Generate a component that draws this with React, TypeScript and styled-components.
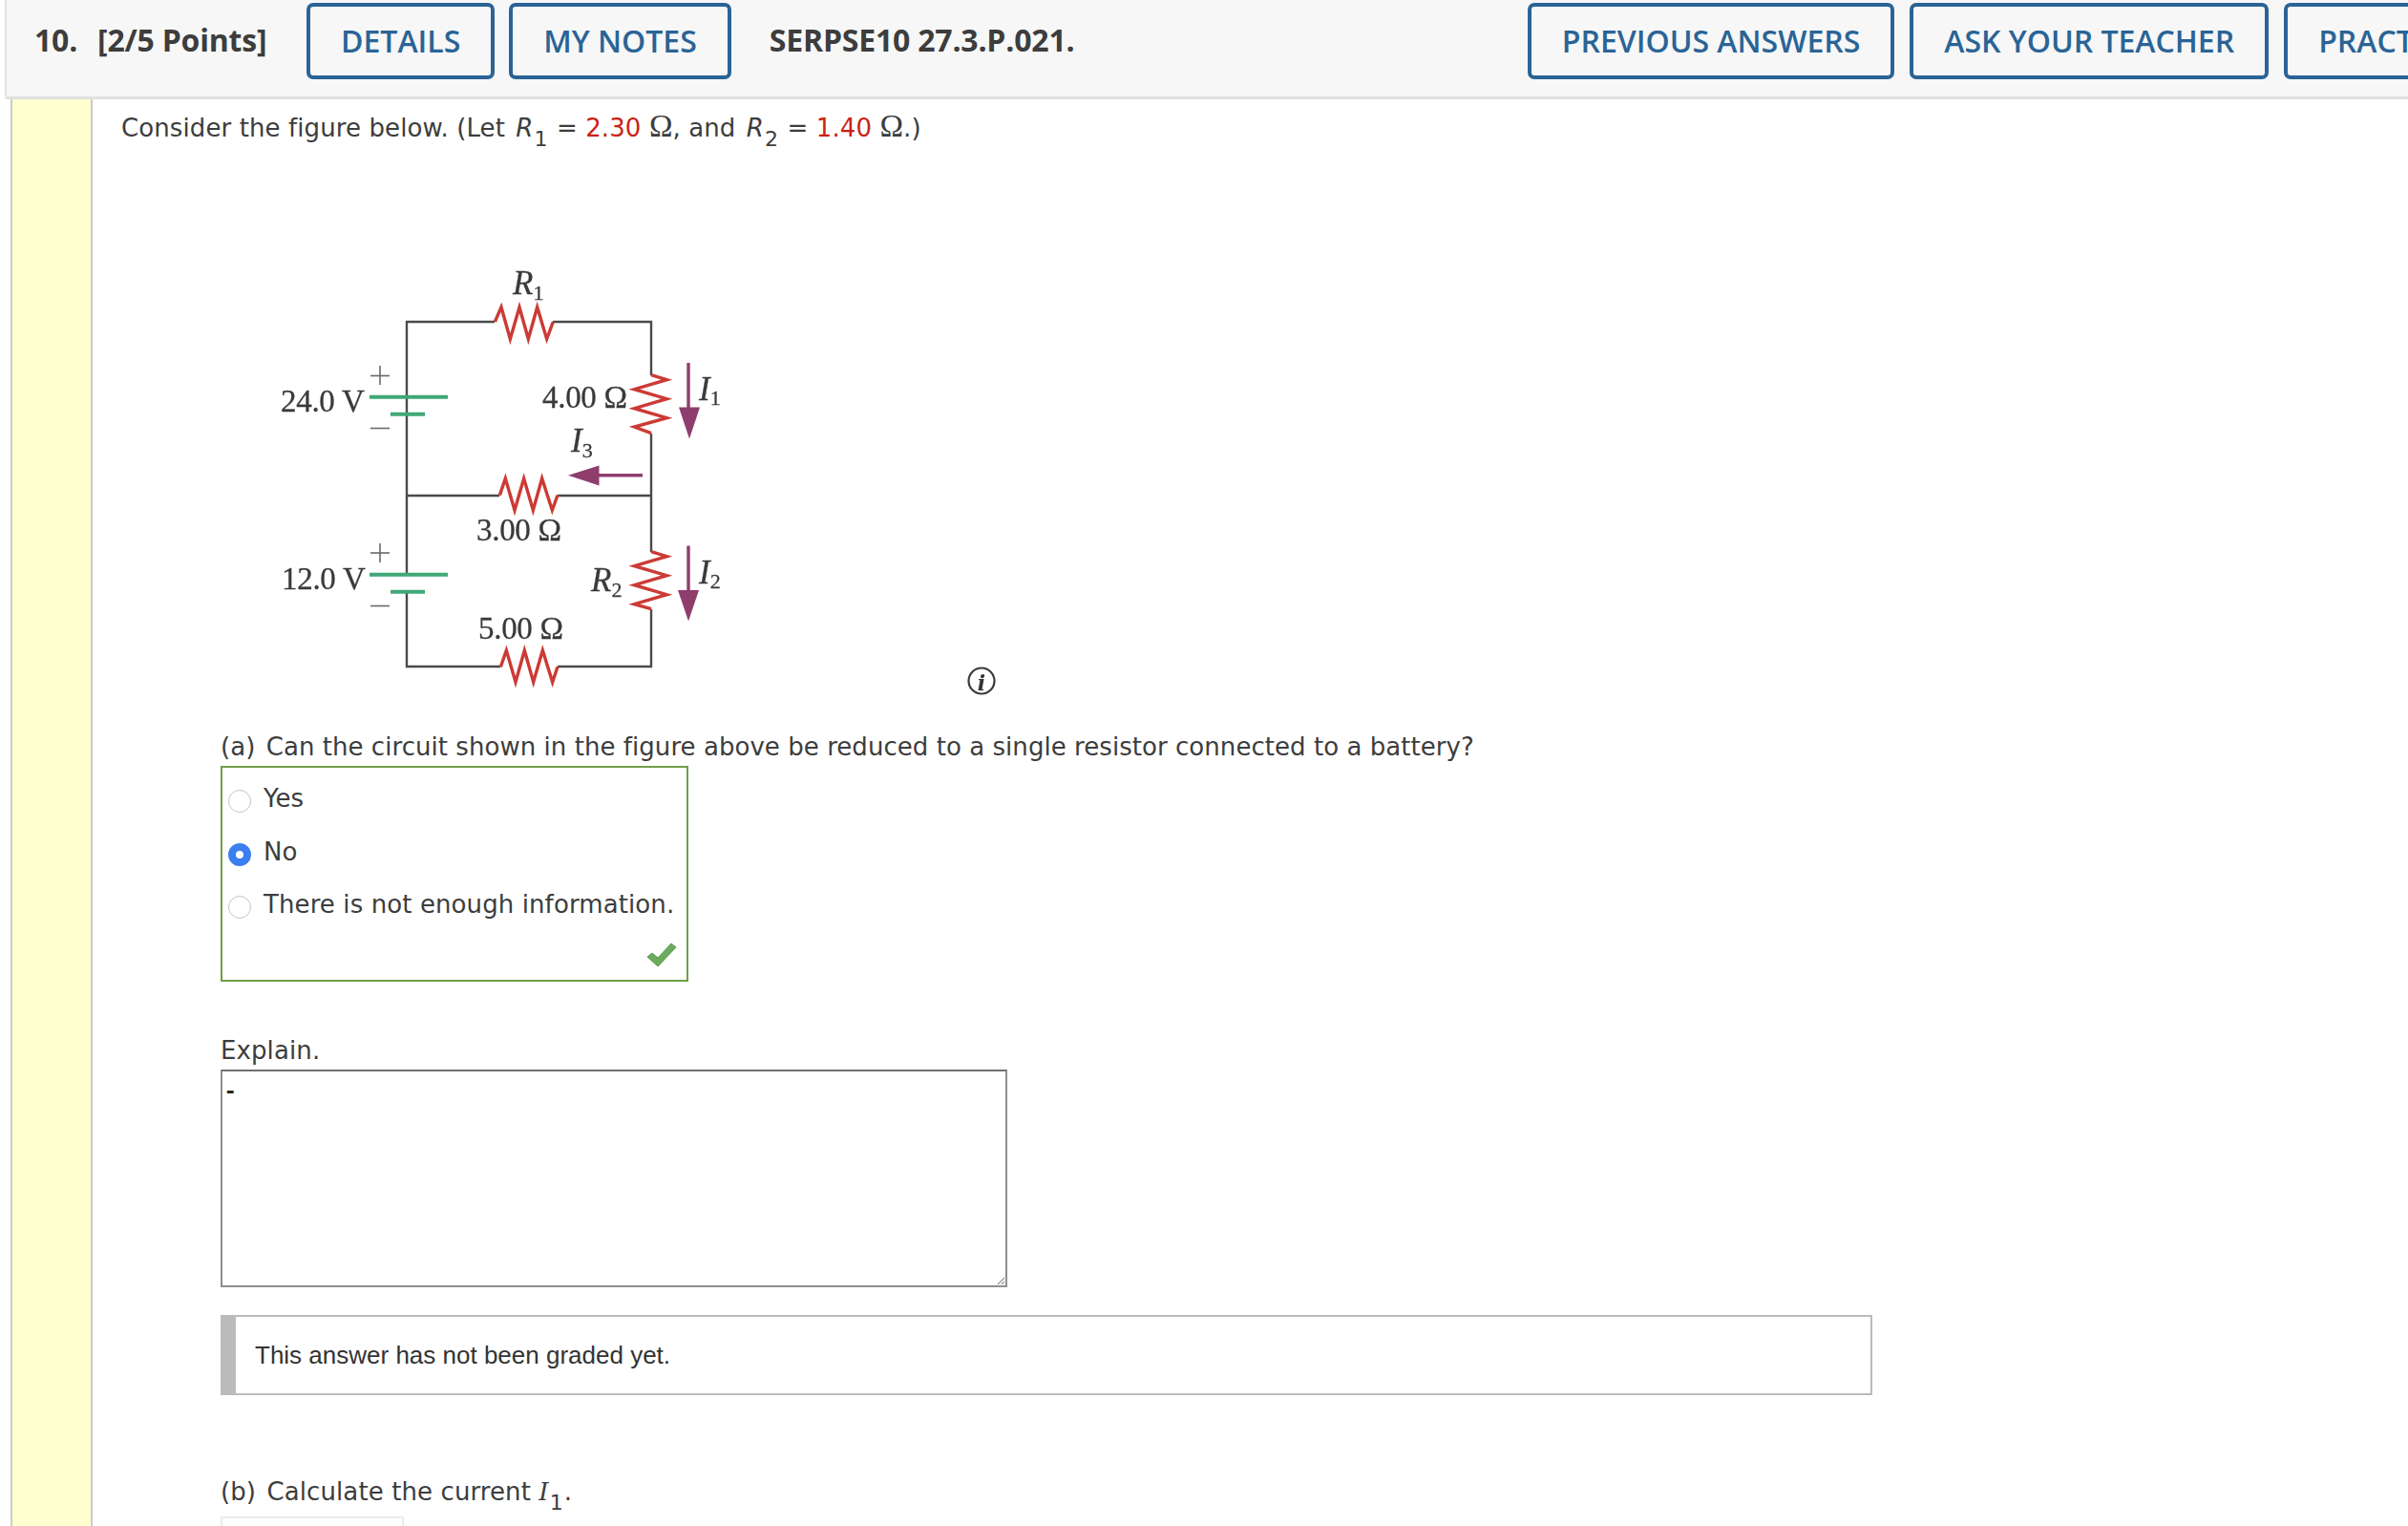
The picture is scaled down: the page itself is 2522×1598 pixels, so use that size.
import React from "react";
import styled, { createGlobalStyle } from "styled-components";

const Global = createGlobalStyle`
  html, body { margin: 0; padding: 0; background: #fff; }
  body { font-family: "DejaVu Sans", Verdana, sans-serif; color: #3d3d3d; }
`;

const Page = styled.div`
  width: 2522px;
  height: 1598px;
  overflow: hidden;
  display: flex;
  flex-direction: column;
`;

const Header = styled.header`
  flex: 0 0 auto;
  height: 104px;
  margin-left: 5px;
  padding-left: 29px;
  padding-top: 3px;
  box-sizing: border-box;
  background: #f7f7f7;
  border-left: 2px solid #e2e2e2;
  border-bottom: 3px solid #e0e0e0;
  border-bottom-left-radius: 3px;
  display: flex;
  align-items: flex-start;
  font-family: "Open Sans", sans-serif;
  font-weight: 600;
  font-size: 32px;
  white-space: nowrap;
`;

const HeadText = styled.span<{ $width: number; $gap?: number }>`
  flex: 0 0 ${(p) => p.$width}px;
  margin-left: ${(p) => p.$gap ?? 0}px;
  height: 80px;
  line-height: 78px;
  color: #3d3d3d;
  font-weight: 700;
  letter-spacing: -0.2px;
`;

const HeadButton = styled.div<{ $gap: number }>`
  flex: 0 0 auto;
  height: 80px;
  line-height: 72px;
  margin-left: ${(p) => p.$gap}px;
  padding: 0 32px;
  box-sizing: border-box;
  border: 4px solid #2a6496;
  border-radius: 7px;
  color: #2a6496;
`;

const Body = styled.div`
  flex: 1 1 auto;
  display: flex;
  min-height: 0;
`;

const Gutter = styled.div`
  flex: 0 0 86px;
  margin-left: 11px;
  box-sizing: border-box;
  background: #ffffd0;
  border-left: 2px solid #ccc;
  border-right: 2px solid #ccc;
`;

const Content = styled.main`
  flex: 1 1 auto;
  padding-left: 30px;
  font-size: 26px;
  letter-spacing: 0.1px;
`;

const Intro = styled.p`
  margin: 12px 0 0;
  line-height: 36px;
  height: 36px;
`;

const Var = styled.i<{ $serif?: boolean }>`
  font-style: italic;
  margin-left: ${(p) => (p.$serif ? 0 : 3)}px;
  font-family: ${(p) => (p.$serif ? '"DejaVu Serif", serif' : "inherit")};
`;

const Sub = styled.sub`
  font-size: 22px;
  line-height: 0;
  vertical-align: -10px;
  margin: 0 1px;
`;

const Red = styled.span`
  color: #cc1f14;
`;

const Ohm = styled.span`
  font-family: "Liberation Serif", serif;
  font-size: 33px;
  line-height: 0;
`;

const Figure = styled.svg`
  display: block;
  margin: 109px 0 0 143px;
  filter: blur(0.45px);
`;

const Part = styled.section`
  padding-left: 104px;
`;

const PartMark = styled.span`
  margin-right: 3px;
`;

const Question = styled.div`
  line-height: 36px;
  height: 36px;
  margin-top: 33px;
  letter-spacing: 0.05px;
`;

const Choices = styled.div`
  position: relative;
  width: 490px;
  height: 226px;
  box-sizing: border-box;
  border: 2px solid #6f9f4a;
  margin-top: 2px;
  padding-top: 4px;
`;

const Choice = styled.label`
  display: flex;
  align-items: center;
  height: 55.7px;
  padding-left: 6px;
  gap: 13px;
`;

const Radio = styled.span<{ $on?: boolean }>`
  flex: 0 0 24px;
  height: 24px;
  box-sizing: border-box;
  border-radius: 50%;
  margin-top: 6px;
  background: #fff;
  border: ${(p) => (p.$on ? "8px solid #3b7ff0" : "1px solid #c4c4c4")};
`;

const CheckMark = styled.svg`
  position: absolute;
  right: 10px;
  bottom: 13px;
  filter: blur(0.4px);
`;

const ExplainLabel = styled.div`
  margin-top: 54px;
  line-height: 36px;
  height: 36px;
`;

const Explain = styled.textarea`
  display: block;
  width: 824px;
  height: 228px;
  box-sizing: border-box;
  margin: 2px 0 0;
  padding: 9px 1px;
  background: #fff;
  border: 2px solid #8f8f8f;
  border-top-color: #707070;
  border-radius: 0;
  outline: none;
  font-family: "Liberation Mono", monospace;
  font-weight: 700;
  font-size: 24px;
  line-height: 26px;
  color: #222;
`;

const Note = styled.div`
  width: 1730px;
  height: 84px;
  box-sizing: border-box;
  margin-top: 29px;
  border: 2px solid #bbb;
  border-left-width: 16px;
  padding-left: 20px;
  display: flex;
  align-items: center;
  font-family: "Liberation Sans", Arial, sans-serif;
  font-size: 26px;
  letter-spacing: 0;
  color: #333;
`;

const PartB = styled.div`
  margin-top: 83px;
  line-height: 36px;
  height: 36px;
`;

const AnswerBox = styled.div`
  width: 192px;
  height: 40px;
  box-sizing: border-box;
  margin-top: 8px;
  border: 2px solid #ececec;
`;

const Wire = styled.polyline`
  fill: none;
  stroke: #4a4a4a;
  stroke-width: 2.4;
`;

const Zig = styled.polyline`
  fill: none;
  stroke: #cc3a35;
  stroke-width: 3.4;
  stroke-linejoin: miter;
`;

const Cell = styled.line`
  stroke: #3fa877;
  stroke-width: 4;
`;

const Sign = styled.line`
  stroke: #6a6a6a;
  stroke-width: 1.6;
`;

const Shaft = styled.line`
  stroke: #8f3d6d;
  stroke-width: 3.4;
`;

const Head = styled.polygon`
  fill: #8f3d6d;
`;

const Label = styled.text<{ $italic?: boolean }>`
  font-family: "Liberation Serif", serif;
  font-size: ${(p) => (p.$italic ? 35 : 33)}px;
  font-style: ${(p) => (p.$italic ? "italic" : "normal")};
  letter-spacing: ${(p) => (p.$italic ? 0 : -0.3)}px;
  fill: #3a3a3a;
  stroke: #3a3a3a;
  stroke-width: 0.3;
`;

const SubLabel = styled.tspan`
  font-size: 22px;
  font-style: normal;
`;

const InfoGlyph = styled.text`
  font-family: "DejaVu Serif", serif;
  font-style: italic;
  font-weight: 700;
  font-size: 22px;
  fill: #333;
  text-anchor: middle;
`;

const pts = (ox: number, oy: number, list: number[][]) =>
  list.map(([x, y]) => `${ox + x / 3},${oy + y / 3}`).join(" ");

const Circuit = () => (
  <Figure width={800} height={470} viewBox="270 260 800 470" aria-label="circuit">
    <Wire points="426,434 426,336 518,336" />
    <Wire points="579,336 682,336 682,392" />
    <Wire points="682,453 682,577" />
    <Wire points="682,637 682,697 584,697" />
    <Wire points="524,697 426,697 426,619" />
    <Wire points="426,601 426,433" />
    <Wire points="426,518 523,518" />
    <Wire points="584,518 682,518" />

    <Zig points={pts(270, 260, [[745,228],[765,182],[793,282],[822,182],[850,282],[878,182],[908,282],[928,228]])} />
    <Zig points={pts(270, 480, [[760,113],[778,60],[807,160],[836,60],[865,160],[893,60],[925,160],[942,113]])} />
    <Zig points={pts(270, 480, [[763,652],[781,600],[810,700],[838,600],[866,700],[895,600],[926,700],[942,652]])} />
    <Zig points={pts(270, 260, [[1236,395],[1285,410],[1183,440],[1285,470],[1183,500],[1285,530],[1183,558],[1236,578]])} />
    <Zig points={pts(270, 480, [[1236,290],[1285,305],[1183,335],[1285,365],[1183,395],[1285,425],[1183,455],[1236,470]])} />

    <Cell x1="387" y1="414.7" x2="469" y2="414.7" />
    <Cell x1="409" y1="432.7" x2="445" y2="432.7" />
    <Cell x1="387" y1="600.7" x2="469" y2="600.7" />
    <Cell x1="409" y1="618.7" x2="445" y2="618.7" />

    <Sign x1="388" y1="392.5" x2="408" y2="392.5" />
    <Sign x1="398" y1="382" x2="398" y2="402" />
    <Sign x1="388" y1="447.5" x2="408" y2="447.5" />
    <Sign x1="388" y1="578" x2="408" y2="578" />
    <Sign x1="398" y1="568" x2="398" y2="588" />
    <Sign x1="388" y1="633.5" x2="408" y2="633.5" />

    <Shaft x1="721" y1="379" x2="721" y2="430" />
    <Head points="711,425.5 733,425.5 722,458.5" />
    <Shaft x1="721" y1="570.5" x2="721" y2="620" />
    <Head points="710,617 732,617 721,649.5" />
    <Shaft x1="673" y1="496.7" x2="620" y2="496.7" />
    <Head points="595,496.7 627.5,486.5 627.5,507.5" />

    <Label x="294" y="430">24.0 V</Label>
    <Label x="568" y="426">4.00 Ω</Label>
    <Label x="537" y="307" $italic>R<SubLabel dy="6">1</SubLabel></Label>
    <Label x="732" y="418" $italic>I<SubLabel dy="5">1</SubLabel></Label>
    <Label x="598" y="472" $italic>I<SubLabel dy="6">3</SubLabel></Label>
    <Label x="499" y="565">3.00 Ω</Label>
    <Label x="295" y="616">12.0 V</Label>
    <Label x="619" y="618" $italic>R<SubLabel dy="6">2</SubLabel></Label>
    <Label x="732" y="610" $italic>I<SubLabel dy="5">2</SubLabel></Label>
    <Label x="501" y="668">5.00 Ω</Label>

    <circle cx="1028" cy="712" r="13.5" fill="#fff" stroke="#3a3a3a" strokeWidth="2.2" />
    <InfoGlyph x="1028" y="722">i</InfoGlyph>
  </Figure>
);

const Check = () => (
  <CheckMark width="32" height="26" viewBox="0 0 32 26" aria-hidden="true">
    <path d="M1 15 L6 11 L12 16 L26 1 L31 5 L12 25 Z" fill="#6cab5e" stroke="#5c9a50" strokeWidth="1" strokeLinejoin="round" />
  </CheckMark>
);

export default function App() {
  return (
    <Page>
      <Global />
      <Header>
        <HeadText $width={66}>10.</HeadText>
        <HeadText $width={178}>[2/5 Points]</HeadText>
        <HeadButton $gap={41}>DETAILS</HeadButton>
        <HeadButton $gap={15}>MY NOTES</HeadButton>
        <HeadText $width={794} $gap={40}>SERPSE10 27.3.P.021.</HeadText>
        <HeadButton $gap={0}>PREVIOUS ANSWERS</HeadButton>
        <HeadButton $gap={16}>ASK YOUR TEACHER</HeadButton>
        <HeadButton $gap={16}>PRACTICE ANOTHER</HeadButton>
      </Header>
      <Body>
        <Gutter />
        <Content>
          <Intro>
            Consider the figure below. (Let <Var>R</Var><Sub>1</Sub> = <Red>2.30</Red> <Ohm>Ω</Ohm>, and <Var>R</Var><Sub>2</Sub> = <Red>1.40</Red> <Ohm>Ω</Ohm>.)
          </Intro>
          <Circuit />
          <Part>
            <Question><PartMark>(a)</PartMark> Can the circuit shown in the figure above be reduced to a single resistor connected to a battery?</Question>
            <Choices>
              <Choice><Radio />Yes</Choice>
              <Choice><Radio $on />No</Choice>
              <Choice><Radio />There is not enough information.</Choice>
              <Check />
            </Choices>
            <ExplainLabel>Explain.</ExplainLabel>
            <Explain readOnly value="-" />
            <Note>This answer has not been graded yet.</Note>
            <PartB><PartMark>(b)</PartMark> Calculate the current <Var $serif>I</Var><Sub>1</Sub>.</PartB>
            <AnswerBox />
          </Part>
        </Content>
      </Body>
    </Page>
  );
}
